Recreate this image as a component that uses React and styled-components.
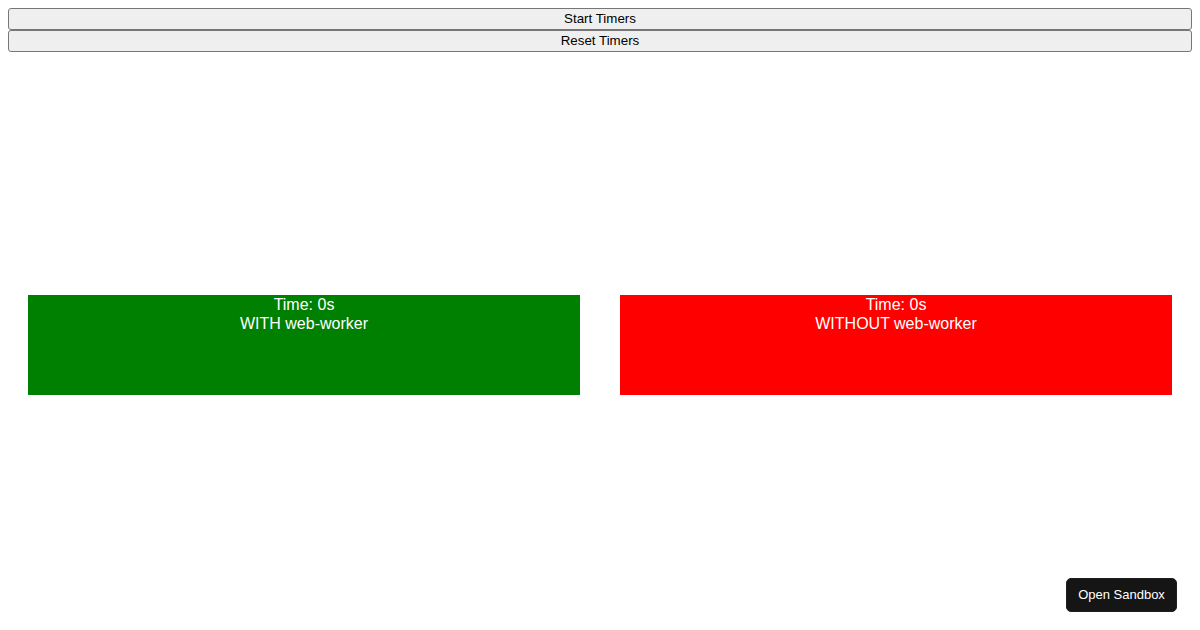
import React from "react";
import styled, { createGlobalStyle } from "styled-components";

const Global = createGlobalStyle`
  html, body { margin: 0; padding: 0; background: #fff; }
  body { margin: 8px; font-family: "Liberation Sans", Arial, sans-serif; }
`;

const Button = styled.button`
  display: block;
  width: 100%;
  height: 22px;
  margin: 0;
  padding: 1px 6px;
  box-sizing: border-box;
  background: #efefef;
  border: 1px solid #767676;
  border-radius: 3px;
  font-family: "Liberation Sans", Arial, sans-serif;
  font-size: 13.333px;
  color: #000;
  line-height: 18px;
`;

const Row = styled.div`
  display: flex;
  gap: 40px;
  padding: 0 20px;
  margin-top: 243px;
`;

const TimerBox = styled.div`
  flex: 1;
  height: 100px;
  background: ${(p) => p.$bg};
  color: #fff;
  text-align: center;
  font-size: 16px;
  line-height: 19px;
  font-family: "Liberation Sans", Arial, sans-serif;
`;

const SandboxButton = styled.button`
  position: fixed;
  right: 23px;
  bottom: 18px;
  width: 111px;
  height: 34px;
  box-sizing: border-box;
  background: #151515;
  color: #fff;
  border: 1px solid #1f1f1f;
  border-radius: 5px;
  font-family: "Liberation Sans", Arial, sans-serif;
  font-size: 13px;
  padding: 0 0 2px;
`;

export default function App() {
  return (
    <>
      <Global />
      <Button>Start Timers</Button>
      <Button>Reset Timers</Button>
      <Row>
        <TimerBox $bg="#008000">
          Time: 0s
          <br />
          WITH web-worker
        </TimerBox>
        <TimerBox $bg="#ff0000">
          Time: 0s
          <br />
          WITHOUT web-worker
        </TimerBox>
      </Row>
      <SandboxButton>Open Sandbox</SandboxButton>
    </>
  );
}
